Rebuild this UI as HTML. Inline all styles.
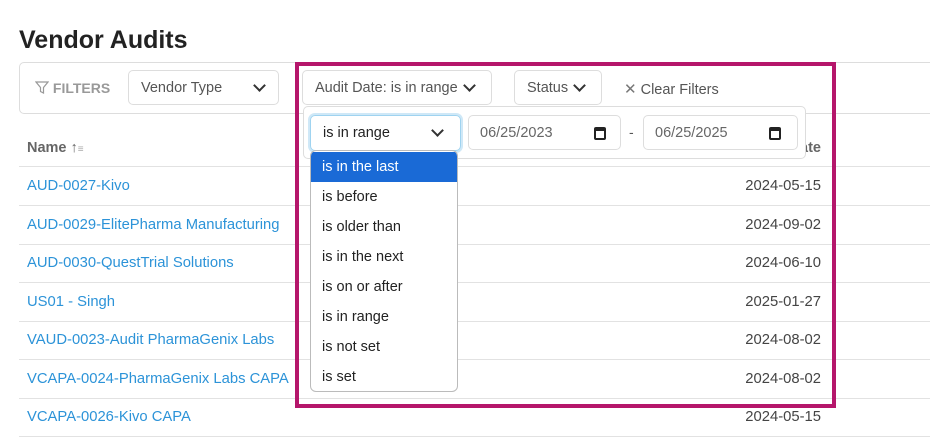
<!DOCTYPE html>
<html><head><style>
*{box-sizing:border-box;margin:0;padding:0}
body{width:930px;height:448px;background:#fff;font-family:"Liberation Sans",sans-serif;position:relative;overflow:hidden;color:#333}
.a{position:absolute}
h1{position:absolute;left:19px;top:26px;font-size:25px;font-weight:bold;color:#222;letter-spacing:0}
.btn{position:absolute;border:1px solid #ddd;border-radius:5px;height:35px;font-size:14.5px;color:#555;line-height:35px;padding-left:12px}
.chev{position:absolute;top:10px;width:9px;height:9px;border-right:2px solid #333;border-bottom:2px solid #333;transform:rotate(45deg)}
.row{position:absolute;left:19px;width:911px;border-bottom:1px solid #e2e2e2}
.lnk{position:absolute;left:27px;font-size:14.8px;color:#2c93d8}
.dt{position:absolute;right:109px;font-size:14.8px;color:#444}
.opt{height:30px;line-height:30px;padding-left:11px;font-size:14.5px;color:#222}
.date{position:absolute;top:115px;height:35px;border:1px solid #ddd;border-radius:5px;font-size:14.5px;color:#666;line-height:35px;padding-left:11px}
.cal{position:absolute;top:11px;width:12px;height:13px;border:2px solid #222;border-top-width:4px;border-radius:2px}
</style></head><body>
<h1>Vendor Audits</h1>
<div class="a" style="left:19px;top:62px;width:920px;height:52px;border:1px solid #ddd;border-radius:5px"></div>
<div class="a" style="left:35px;top:80px;font-size:14px;color:#999;font-weight:bold">
<svg width="14" height="13" viewBox="0 0 14 13" style="vertical-align:-1px"><path d="M1 1h12L8.5 6.5V12L5.5 10.5V6.5Z" fill="none" stroke="#999" stroke-width="1.2"/></svg> FILTERS</div>
<div class="btn" style="left:128px;top:70px;width:151px">Vendor Type<span class="chev" style="left:126px"></span></div>
<div class="btn" style="left:302px;top:70px;width:190px">Audit Date: is in range<span class="chev" style="left:162px"></span></div>
<div class="btn" style="left:514px;top:70px;width:88px">Status<span class="chev" style="left:60px"></span></div>
<div class="a" style="left:624px;top:80px;font-size:14.5px;color:#555"><span style="color:#777;font-size:15px;font-weight:300">✕</span> Clear Filters</div>

<div class="a" style="left:27px;top:140px;font-size:14.5px;font-weight:bold;color:#666">Name <span style="color:#666">↑</span><span style="font-size:10px;color:#aaa">≡</span></div>
<div class="a" style="left:800px;top:140px;font-size:14.5px;font-weight:bold;color:#666">ate</div>
<div class="row" style="top:166px;height:1px"></div>
<div class="row" style="top:205px;height:1px"></div>
<div class="row" style="top:244px;height:1px"></div>
<div class="row" style="top:282px;height:1px"></div>
<div class="row" style="top:321px;height:1px"></div>
<div class="row" style="top:359px;height:1px"></div>
<div class="row" style="top:398px;height:1px"></div>
<div class="row" style="top:436px;height:1px"></div>
<div class="lnk" style="top:178px">AUD-0027-Kivo</div><div class="dt" style="top:178px">2024-05-15</div>
<div class="lnk" style="top:217px">AUD-0029-ElitePharma Manufacturing</div><div class="dt" style="top:217px">2024-09-02</div>
<div class="lnk" style="top:255px">AUD-0030-QuestTrial Solutions</div><div class="dt" style="top:255px">2024-06-10</div>
<div class="lnk" style="top:294px">US01 - Singh</div><div class="dt" style="top:294px">2025-01-27</div>
<div class="lnk" style="top:332px">VAUD-0023-Audit PharmaGenix Labs</div><div class="dt" style="top:332px">2024-08-02</div>
<div class="lnk" style="top:371px">VCAPA-0024-PharmaGenix Labs CAPA</div><div class="dt" style="top:371px">2024-08-02</div>
<div class="lnk" style="top:409px">VCAPA-0026-Kivo CAPA</div><div class="dt" style="top:409px">2024-05-15</div>

<div class="a" style="left:303px;top:106px;width:503px;height:53px;background:#fff;border:1px solid #ddd;border-radius:5px"></div>
<div class="a" style="left:310px;top:115px;width:151px;height:36px;border:1px solid #9fd3f0;box-shadow:0 0 0 2px #cfe8f7;border-radius:5px;font-size:14.5px;color:#222;line-height:34px;padding-left:12px">is in range<span class="chev" style="left:122px;top:10px"></span></div>
<div class="date" style="left:468px;width:153px">06/25/2023<span class="cal" style="left:125px"></span></div>
<div class="a" style="left:629px;top:124px;font-size:14px;color:#555">-</div>
<div class="date" style="left:643px;width:155px">06/25/2025<span class="cal" style="left:125px"></span></div>

<div class="a" style="left:310px;top:150px;width:148px;height:242px;background:#fff;border:1px solid #bbb;border-radius:6px;overflow:hidden;padding-top:1px">
<div class="opt" style="background:#1a6ad6;color:#fff">is in the last</div>
<div class="opt">is before</div><div class="opt">is older than</div><div class="opt">is in the next</div>
<div class="opt">is on or after</div><div class="opt">is in range</div><div class="opt">is not set</div><div class="opt">is set</div>
</div>
<div class="a" style="left:295px;top:62px;width:541px;height:346px;border:4px solid #b5166b"></div>
</body></html>
